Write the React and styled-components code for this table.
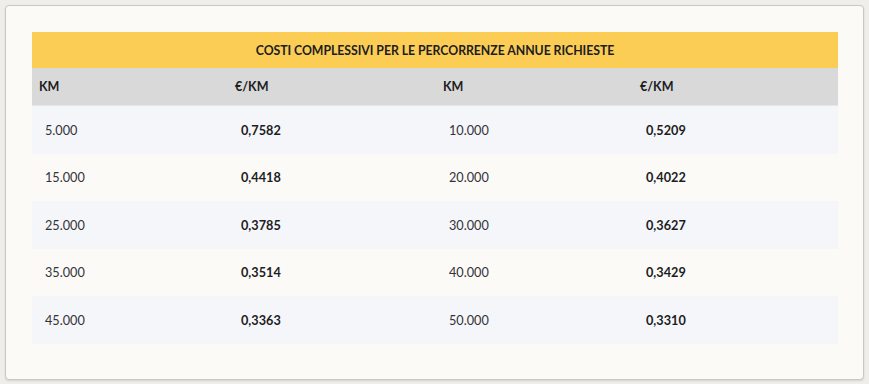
import React from 'react';
import styled, { createGlobalStyle } from 'styled-components';

const GlobalStyle = createGlobalStyle`
  html, body {
    margin: 0;
    padding: 0;
    background: #efeeeb;
  }
  body {
    font-family: Lato, "Noto Sans", sans-serif;
  }
`

const Page = styled.div`
  box-sizing: border-box;
  width: 869px;
  height: 384px;
  padding: 5px 5px 4px 5px;
`

const Card = styled.div`
  box-sizing: border-box;
  height: 100%;
  padding: 26px 25px 0 26px;
  background: #fbfaf7;
  border: 1px solid #c9c8c5;
  border-radius: 4px;
  box-shadow: 0 1px 2px rgba(0, 0, 0, 0.12);
`

const Table = styled.div`
  display: grid;
  grid-template-columns: 196px 208px 197px 205px;
  width: 806px;
  color: #1d1d1f;
`

const Title = styled.div`
  grid-column: 1 / -1;
  height: 36px;
  display: flex;
  align-items: center;
  justify-content: center;
  background: #fccd55;
  font-size: 12.3px;
  font-weight: 700;
  letter-spacing: -0.05px;
`

const HeadCell = styled.div`
  height: 37px;
  display: flex;
  align-items: center;
  padding: 0 7px;
  background: #d9d9d9;
  font-size: 12.5px;
  font-weight: 700;
  border-bottom: 1px solid #e3e6ec;
`

const Cell = styled.div`
  height: 47.5px;
  display: flex;
  align-items: center;
  padding: 0 13px;
  background: ${props => (props.$odd ? '#f5f6f9' : '#fbfaf7')};
  font-size: 12.7px;
  font-weight: ${props => (props.$bold ? 700 : 400)};
  color: ${props => (props.$bold ? '#1d1d1f' : '#333338')};
`

const rows = [
  ['5.000', '0,7582', '10.000', '0,5209'],
  ['15.000', '0,4418', '20.000', '0,4022'],
  ['25.000', '0,3785', '30.000', '0,3627'],
  ['35.000', '0,3514', '40.000', '0,3429'],
  ['45.000', '0,3363', '50.000', '0,3310'],
];

const App = () => (
  <>
    <GlobalStyle />
    <Page>
      <Card>
        <Table>
          <Title>COSTI COMPLESSIVI PER LE PERCORRENZE ANNUE RICHIESTE</Title>
          <HeadCell>KM</HeadCell>
          <HeadCell>€/KM</HeadCell>
          <HeadCell>KM</HeadCell>
          <HeadCell>€/KM</HeadCell>
          {rows.map((row, i) =>
            row.map((value, j) => (
              <Cell key={`${i}-${j}`} $odd={i % 2 === 0} $bold={j % 2 === 1}>
                {value}
              </Cell>
            ))
          )}
        </Table>
      </Card>
    </Page>
  </>
);

export default App;
